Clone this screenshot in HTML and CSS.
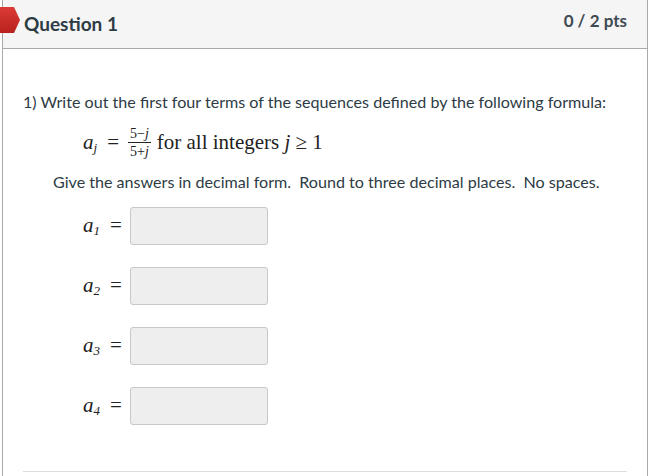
FILE: index.html
```html
<!DOCTYPE html>
<html lang="en">
<head>
  <meta charset="UTF-8">
  <title>Question 1</title>
  <link rel="stylesheet" href="styles.css">
</head>
<body>

  <div class="question">
    <div class="question-header">
      <span class="flag"></span>
      <h2 class="question-name">Question 1</h2>
      <span class="points">0 / 2 pts</span>
    </div>

    <div class="question-body">
      <p class="prompt">1) Write out the first four terms of the sequences defined by the following formula:</p>

      <div class="formula">
        <span class="var">a<sub>j</sub></span>
        <span class="rel">=</span>
        <span class="frac">
          <span class="num">5−<i>j</i></span>
          <span class="den">5+<i>j</i></span>
        </span>
        <span class="words">for all integers <i>j</i> ≥ 1</span>
      </div>

      <p class="note">Give the answers in decimal form.&nbsp; Round to three decimal places.&nbsp; No spaces.</p>

      <div class="answers">
        <div class="answer">
          <span class="var">a<sub>1</sub></span>
          <span class="rel">=</span>
          <input class="answer-box" type="text">
        </div>
        <div class="answer">
          <span class="var">a<sub>2</sub></span>
          <span class="rel">=</span>
          <input class="answer-box" type="text">
        </div>
        <div class="answer">
          <span class="var">a<sub>3</sub></span>
          <span class="rel">=</span>
          <input class="answer-box" type="text">
        </div>
        <div class="answer">
          <span class="var">a<sub>4</sub></span>
          <span class="rel">=</span>
          <input class="answer-box" type="text">
        </div>
      </div>

      <div class="divider"></div>
    </div>
  </div>

</body>
</html>
```

FILE: styles.css
```css
:root {
  --text: #2d3b45;
  --border: #a9a9a9;
  --header-bg: #f5f5f5;
  --input-bg: #eeeeee;
  --input-border: #c8c8c8;
  --math: #222222;
}

body {
  margin: 0;
  background: white;
  font-family: Lato, 'Open Sans', sans-serif;
  color: var(--text);
}

.question {
  margin: 0 2px;
  border: 1px solid var(--border);
  border-top: none;
  height: 520px;
}

.question-header {
  position: relative;
  display: flex;
  justify-content: space-between;
  align-items: flex-start;
  height: 49px;
  box-sizing: border-box;
  padding: 0 20px 0 21px;
  background: var(--header-bg);
  border-bottom: 1px solid var(--border);
}

.flag {
  position: absolute;
  left: -3px;
  top: 7px;
  width: 20px;
  height: 26px;
  background: linear-gradient(#dc3b36, #b8221d);
  clip-path: polygon(0 0, 70% 0, 100% 50%, 70% 100%, 0 100%);
}

.question-name {
  margin: 12px 0 0;
  font-size: 19px;
  font-weight: bold;
}

.points {
  margin-top: 10px;
  font-size: 17px;
  font-weight: bold;
  color: #3f4a52;
}

.question-body {
  padding: 0 20px;
}

.prompt {
  margin: 0;
  padding-top: 43px;
  font-size: 16.1px;
}

.formula {
  display: flex;
  align-items: center;
  margin: 15px 0 0 60px;
  font-family: 'Liberation Serif', serif;
  font-size: 21px;
  color: var(--math);
}

.var {
  font-style: italic;
}

.var sub {
  font-size: 13px;
  vertical-align: -3px;
}

.rel {
  margin: 0 9px 0 10px;
}

.frac {
  display: inline-flex;
  flex-direction: column;
  align-items: center;
  font-size: 14px;
  line-height: 1.1;
  margin-right: 6px;
}

.num {
  border-bottom: 1px solid var(--math);
  padding: 0 2px 1px;
}

.den {
  padding-top: 1px;
}

.note {
  margin: 12px 0 0 30px;
  font-size: 16.1px;
}

.answers {
  display: flex;
  flex-direction: column;
  gap: 22px;
  margin: 16px 0 0 60px;
}

.answer {
  display: flex;
  align-items: center;
  font-family: 'Liberation Serif', serif;
  font-size: 21px;
  color: var(--math);
}

.answer .rel {
  margin: 0 8px 0 10px;
}

.answer-box {
  width: 138px;
  height: 38px;
  box-sizing: border-box;
  margin: 0;
  background: var(--input-bg);
  border: 1px solid var(--input-border);
  border-radius: 3px;
}

.divider {
  margin-top: 46px;
  border-top: 1px solid #dddddd;
}
```
